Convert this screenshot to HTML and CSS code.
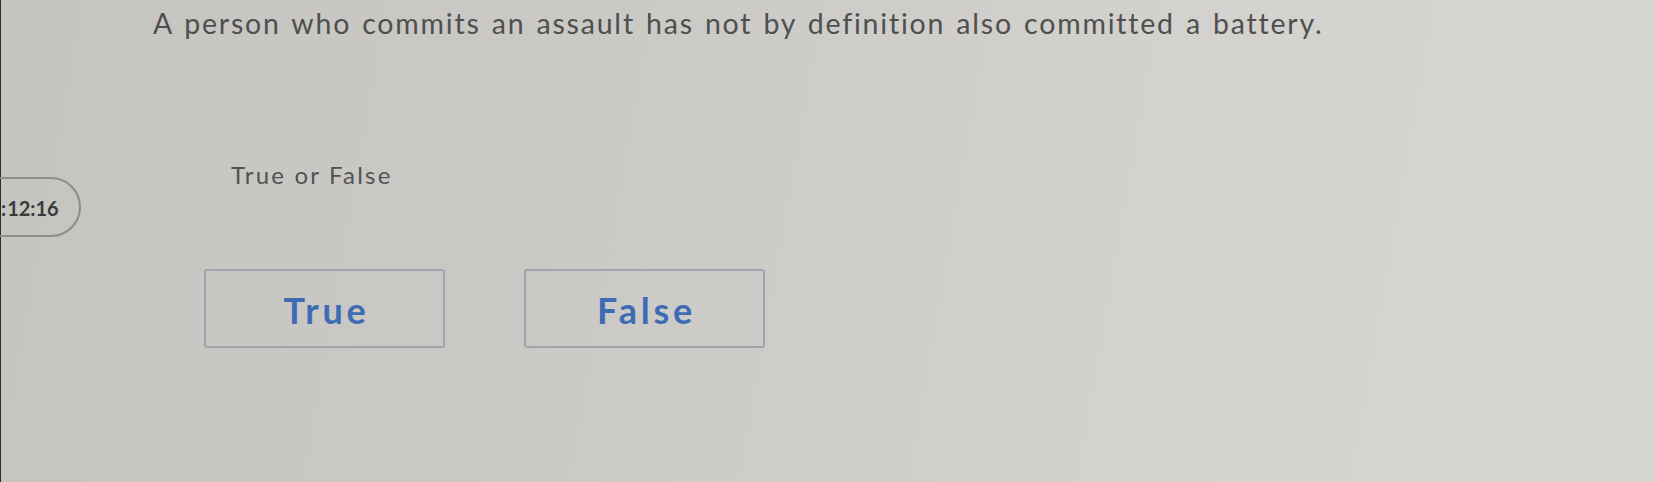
FILE: index.html
```html
<!DOCTYPE html>
<html lang="en">
<head>
<meta charset="utf-8">
<title>True or False</title>
<link rel="stylesheet" href="styles.css">
</head>
<body>
<div class="screen">
  <div class="timer"><span class="timer-text">12:16</span></div>
  <h1 class="question">A person who commits an assault has not by definition also committed a battery.</h1>
  <p class="prompt">True or False</p>
  <div class="choices">
    <button class="choice" type="button">True</button>
    <button class="choice" type="button">False</button>
  </div>
</div>
</body>
</html>
```

FILE: styles.css
```css
html, body {
  margin: 0;
  padding: 0;
  height: 100%;
}
body {
  background: linear-gradient(100deg, #c5c4c1 0%, #cac9c6 35%, #d3d2ce 70%, #d7d6d2 100%);
  font-family: Lato, "Liberation Sans", sans-serif;
  overflow: hidden;
}
.screen {
  position: relative;
  height: 482px;
  border-left: 1px solid #2b2b2b;
  box-sizing: border-box;
}
.question {
  margin: 0 0 0 152px;
  padding-top: 7px;
  font-size: 28.5px;
  line-height: 33px;
  font-weight: 400;
  letter-spacing: 1.8px;
  word-spacing: 2px;
  color: #4f4f4f;
  white-space: nowrap;
}
.prompt {
  margin: 121px 0 0 230px;
  font-size: 24px;
  line-height: 28px;
  font-weight: 400;
  letter-spacing: 2.2px;
  color: #535353;
}
.choices {
  display: flex;
  gap: 79px;
  margin: 80px 0 0 203px;
}
.choice {
  width: 241px;
  height: 79px;
  box-sizing: border-box;
  border: 2px solid #a2a3ad;
  border-radius: 3px;
  background: transparent;
  font-family: Lato, "Liberation Sans", sans-serif;
  font-size: 36px;
  font-weight: 700;
  letter-spacing: 3.8px;
  color: #3e6cb4;
  padding: 2px 0 0 4px;
}
.timer {
  position: absolute;
  left: -36px;
  top: 177px;
  height: 60px;
  box-sizing: border-box;
  padding: 0 20px 0 40px;
  border: 2px solid #8c8c8c;
  border-radius: 30px;
  display: flex;
  align-items: center;
}
.timer-text {
  font-size: 20px;
  font-weight: 700;
  color: #3a3a3a;
  padding-top: 2px;
}
.timer-text::before {
  content: ":";
  margin-left: -6px;
  margin-right: 1px;
}
```
